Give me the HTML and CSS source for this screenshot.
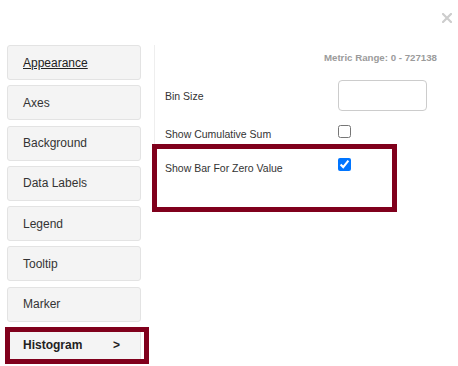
FILE: index.html
```html
<!DOCTYPE html>
<html lang="en">
<head>
  <meta charset="UTF-8" />
  <meta name="viewport" content="width=device-width, initial-scale=1.0" />
  <title>Chart Settings</title>
  <link rel="stylesheet" href="styles.css">
</head>
<body>
  <div class="dialog">
    <span class="close" title="Close">
      <svg width="10" height="10" viewBox="0 0 10 10"><path d="M1 1L9 9M9 1L1 9" stroke="#cdcdcd" stroke-width="2.2" stroke-linecap="square" /></svg>
    </span>

    <div class="layout">
      <ul class="tabs">
        <li class="tab link">Appearance</li>
        <li class="tab">Axes</li>
        <li class="tab">Background</li>
        <li class="tab">Data Labels</li>
        <li class="tab">Legend</li>
        <li class="tab">Tooltip</li>
        <li class="tab">Marker</li>
        <li class="tab current"><span>Histogram</span><span>&gt;</span></li>
      </ul>

      <section class="panel">
        <div class="metric">Metric Range: 0 - 727138</div>

        <div class="row bin">
          <label class="label" for="bin-size">Bin Size</label>
          <input type="text" id="bin-size" class="field" />
        </div>

        <div class="row check cumulative">
          <label class="label" for="cumulative">Show Cumulative Sum</label>
          <input type="checkbox" id="cumulative" />
        </div>

        <div class="row check zero">
          <label class="label" for="zero-bar">Show Bar For Zero Value</label>
          <input type="checkbox" id="zero-bar" checked />
        </div>
      </section>
    </div>
  </div>
</body>
</html>
```

FILE: styles.css
```css
* { box-sizing: border-box; margin: 0; padding: 0; }
body { font-family: "Liberation Sans", Arial, sans-serif; background: #fff; color: #333; }

.dialog { position: relative; height: 366px; overflow: hidden; }
.close { position: absolute; top: 13px; right: 6px; width: 10px; height: 10px; line-height: 0; cursor: pointer; }

.layout { display: flex; align-items: flex-start; padding: 45px 0 0 7px; }

.tabs { list-style: none; width: 134px; display: flex; flex-direction: column; gap: 5.3px; }
.tab { height: 35px; display: flex; align-items: center; padding: 0 20px 0 15px; background: #f4f4f4; border: 1px solid #e3e3e3; border-radius: 3px; font-size: 12px; color: #333; cursor: pointer; }
.tab.link { text-decoration: underline; color: #222; }
.tab.current { position: relative; justify-content: space-between; font-weight: bold; color: #222; }
.tab.current::after { content: ""; position: absolute; left: -3px; right: -9px; top: -1px; bottom: -3px; border: 5px solid #80001c; }

.panel { flex: 1; margin-left: 13px; border-left: 1px solid #eee; padding: 6px 21px 24px 10px; }
.metric { text-align: right; font-size: 9.7px; font-weight: bold; color: #9b9b9b; line-height: 14px; }

.row { display: flex; }
.label { width: 173px; font-size: 10.5px; line-height: 16px; color: #333; }
.bin { margin-top: 15px; height: 31px; align-items: center; }
.field { width: 89px; height: 31px; border: 1px solid #ccc; border-radius: 4px; }

.check { align-items: flex-start; }
.check input { width: 13px; height: 13px; margin: 2px 0 0; }
.cumulative { margin-top: 12px; }
.cumulative .label { padding-top: 3px; }
.zero { position: relative; margin-top: 14px; }
.zero .label { padding-top: 4px; }
.zero::after { content: ""; position: absolute; left: -13px; top: -12px; width: 235px; height: 58px; border: 5px solid #80001c; }
```
